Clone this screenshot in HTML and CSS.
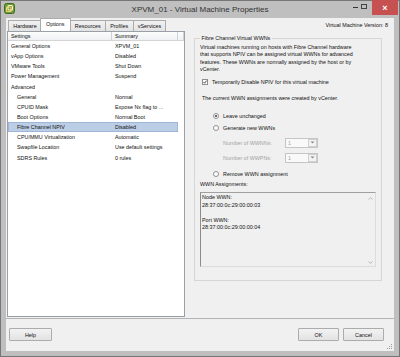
FILE: index.html
```html
<!DOCTYPE html>
<html>
<head>
<meta charset="utf-8">
<link rel="stylesheet" href="styles.css">
</head>
<body>
<div class="window">
  <div class="titlebar">
    <div class="tb-left">
      <svg class="app-icon" width="11" height="11" viewBox="0 0 11 11">
        <rect x="0.5" y="0.5" width="10" height="10" rx="2" fill="#6f9d3d" stroke="#3f6a1c"/>
        <rect x="2.5" y="4" width="4.5" height="4.5" rx="1" fill="none" stroke="#f3d36a" stroke-width="1.1"/>
        <rect x="4" y="2.5" width="4.5" height="4.5" rx="1" fill="none" stroke="#fff3c4" stroke-width="1.1"/>
      </svg>
    </div>
    <div class="title">XPVM_01 - Virtual Machine Properties</div>
    <div class="controls">
      <span class="ctl-min"></span>
      <span class="ctl-max"></span>
      <span class="ctl-close">×</span>
    </div>
  </div>
  <div class="client">
    <div class="tabbar">
      <div class="tabs">
        <span class="tab">Hardware</span>
        <span class="tab active">Options</span>
        <span class="tab">Resources</span>
        <span class="tab">Profiles</span>
        <span class="tab">vServices</span>
      </div>
      <div class="version">Virtual Machine Version: 8</div>
    </div>
    <div class="main">
      <div class="list">
        <div class="list-head">
          <span class="h1">Settings</span>
          <span class="h2">Summary</span>
          <span class="h3"></span>
        </div>
        <div class="row"><span class="c1">General Options</span><span class="c2">XPVM_01</span></div>
        <div class="row"><span class="c1">vApp Options</span><span class="c2">Disabled</span></div>
        <div class="row"><span class="c1">VMware Tools</span><span class="c2">Shut Down</span></div>
        <div class="row"><span class="c1">Power Management</span><span class="c2">Suspend</span></div>
        <div class="row"><span class="c1">Advanced</span><span class="c2"></span></div>
        <div class="row sub"><span class="c1">General</span><span class="c2">Normal</span></div>
        <div class="row sub"><span class="c1">CPUID Mask</span><span class="c2">Expose Nx flag to ...</span></div>
        <div class="row sub"><span class="c1">Boot Options</span><span class="c2">Normal Boot</span></div>
        <div class="row sub selected"><span class="c1">Fibre Channel NPIV</span><span class="c2">Disabled</span></div>
        <div class="row sub"><span class="c1">CPU/MMU Virtualization</span><span class="c2">Automatic</span></div>
        <div class="row sub"><span class="c1">Swapfile Location</span><span class="c2">Use default settings</span></div>
        <div class="row sub"><span class="c1">SDRS Rules</span><span class="c2">0 rules</span></div>
      </div>
      <div class="pane">
        <fieldset class="group">
          <legend>Fibre Channel Virtual WWNs</legend>
          <p class="desc">Virtual machines running on hosts with Fibre Channel hardware<br>that supports NPIV can be assigned virtual WWNs for advanced<br>features. These WWNs are normally assigned by the host or by<br>vCenter.</p>
          <div class="check-row">
            <svg class="checkbox" width="6" height="6" viewBox="0 0 6 6">
              <rect x="0.5" y="0.5" width="5" height="5" fill="#fff" stroke="#8e8f8f"/>
              <path d="M1.5 3 L2.6 4.2 L4.6 1.6" fill="none" stroke="#333" stroke-width="0.9"/>
            </svg>
            <span>Temporarily Disable NPIV for this virtual machine</span>
          </div>
          <p class="note">The current WWN assignments were created by vCenter.</p>
          <div class="radio-row r1"><span class="radio on"></span><span>Leave unchanged</span></div>
          <div class="radio-row r2"><span class="radio"></span><span>Generate new WWNs</span></div>
          <div class="num-row n1">
            <span class="num-label">Number of WWNNs:</span>
            <span class="combo"><span class="combo-val">1</span><span class="combo-btn"><svg width="5" height="3" viewBox="0 0 5 3"><path d="M0.5 0.5 L2.5 2.5 L4.5 0.5 Z" fill="#8a8a8a"/></svg></span></span>
          </div>
          <div class="num-row n2">
            <span class="num-label">Number of WWPNs:</span>
            <span class="combo"><span class="combo-val">1</span><span class="combo-btn"><svg width="5" height="3" viewBox="0 0 5 3"><path d="M0.5 0.5 L2.5 2.5 L4.5 0.5 Z" fill="#8a8a8a"/></svg></span></span>
          </div>
          <div class="radio-row r3"><span class="radio"></span><span>Remove WWN assignment</span></div>
          <p class="assign-label">WWN Assignments:</p>
          <div class="wwn-box">
            <div class="wwn-text">Node WWN:<br>28:37:00:0c:29:00:00:03<br><br>Port WWN:<br>28:37:00:0c:29:00:00:04</div>
            <div class="wwn-scroll">
              <svg width="5" height="3" viewBox="0 0 5 3"><path d="M0.5 2.5 L2.5 0.7 L4.5 2.5" fill="none" stroke="#a8a8a8" stroke-width="0.8"/></svg>
              <svg width="5" height="3" viewBox="0 0 5 3"><path d="M0.5 0.5 L2.5 2.3 L4.5 0.5" fill="none" stroke="#a8a8a8" stroke-width="0.8"/></svg>
            </div>
          </div>
        </fieldset>
      </div>
    </div>
    <div class="footer">
      <button class="btn help">Help</button>
      <div class="footer-right">
        <button class="btn">OK</button>
        <button class="btn">Cancel</button>
      </div>
      <svg class="grip" width="7" height="7" viewBox="0 0 7 7">
        <g fill="#9a9a9a">
          <rect x="5" y="1" width="1" height="1"/>
          <rect x="3" y="3" width="1" height="1"/><rect x="5" y="3" width="1" height="1"/>
          <rect x="1" y="5" width="1" height="1"/><rect x="3" y="5" width="1" height="1"/><rect x="5" y="5" width="1" height="1"/>
        </g>
      </svg>
    </div>
  </div>
</div>
</body>
</html>
```

FILE: styles.css
```css
* { box-sizing: border-box; margin: 0; padding: 0; }
html, body { width: 400px; height: 357px; overflow: hidden; }
body {
  font-family: "Liberation Sans", Arial, sans-serif;
  font-size: 5.4px;
  color: #111;
  background: #c4c4c4;
}

.window {
  width: 400px;
  height: 357px;
  background: #bfbfbf;
  border: 1px solid #767676;
  padding: 0 5px 5px 5px;
  display: flex;
  flex-direction: column;
}

/* title bar */
.titlebar {
  height: 17px;
  margin: 0 -5px;
  display: grid;
  grid-template-columns: 1fr auto 1fr;
  align-items: center;
}
.tb-left { display: flex; align-items: center; padding-left: 3px; }
.app-icon { display: block; margin-top: -2px; }
.title {
  font-size: 8px;
  color: #333;
  margin-top: -1px;
}
.controls {
  justify-self: end;
  align-self: start;
  display: flex;
  align-items: flex-start;
  margin-top: -1px;
  padding-right: 1px;
}
.ctl-min {
  width: 5px; height: 1px; background: #333;
  margin-top: 7px; margin-right: 3px;
}
.ctl-max {
  width: 6px; height: 5px; border: 1px solid #444; border-top-width: 1.5px;
  margin-top: 4px; margin-right: 5px;
}
.ctl-close {
  width: 26px; height: 15px;
  background: #c75050;
  color: #fff;
  font-size: 9px;
  font-weight: bold;
  display: flex; align-items: center; justify-content: center;
}

/* client */
.client {
  flex: 1;
  background: #f0f0f0;
  display: flex;
  flex-direction: column;
}

.tabbar {
  height: 13px;
  display: flex;
  justify-content: space-between;
  align-items: flex-end;
}
.tabs { display: flex; align-items: flex-end; padding-left: 2px; }
.tab {
  height: 11px;
  padding: 0 4.3px;
  line-height: 10px;
  border: 1px solid #acacac;
  border-bottom: none;
  background: linear-gradient(#f2f2f2, #e3e3e3);
  margin-right: -1px;
}
.tab.active {
  height: 13px;
  line-height: 11px;
  background: #fff;
  margin: 0 -1px 0 -1px;
  padding: 0 5px;
  position: relative;
  z-index: 1;
}
.version {
  align-self: center;
  padding-right: 6px;
}

/* main */
.main {
  height: 287px;
  display: flex;
}
.list {
  margin-left: 1px;
  width: 178px;
  height: 286px;
  background: #fff;
  border: 1px solid #9aa0a8;
}
.list-head {
  height: 9px;
  display: flex;
  background: linear-gradient(#fcfcfc, #eef0f2);
  border-bottom: 1px solid #d5d5d5;
  line-height: 8px;
}
.list-head span { border-right: 1px solid #cfd2d6; }
.h1 { width: 104px; padding-left: 3px; }
.h2 { width: 66px; padding-left: 3px; }
.h3 { width: 6px; }

.row {
  height: 10.15px;
  display: flex;
  align-items: center;
  width: 170px;
}
.c1 { width: 104px; padding-left: 3px; white-space: nowrap; }
.c2 { width: 66px; padding-left: 3px; white-space: nowrap; }
.row.sub .c1 { padding-left: 9px; }
.row.selected {
  background: #bccee6;
  outline: 1px solid #9fb6d6;
  outline-offset: -1px;
}

/* right pane */
.pane {
  margin-left: 9px;
  width: 188px;
  padding-top: 3.5px;
}
.group {
  border: 1px solid #d6d6d6;
  padding: 2px 5px 13px 5px;
}
.group legend {
  padding: 0 1.5px;
  line-height: 7px;
}
.desc {
  line-height: 7.6px;
  white-space: nowrap;
}
.check-row {
  height: 7px;
  margin-top: 4.6px;
  margin-left: 2px;
  display: flex;
  align-items: center;
  white-space: nowrap;
}
.checkbox { display: block; margin-right: 4px; }
.note {
  height: 7px;
  line-height: 7px;
  margin-top: 10px;
  margin-left: 2px;
}
.radio-row {
  height: 7px;
  margin-left: 13px;
  display: flex;
  align-items: center;
}
.radio-row.r1 { margin-top: 10px; }
.radio-row.r2 { margin-top: 5px; }
.radio-row.r3 { margin-top: 7.5px; }
.radio {
  width: 6px; height: 6px;
  border: 1px solid #8e8f8f;
  border-radius: 50%;
  background: #fff;
  margin-right: 4px;
  display: flex; align-items: center; justify-content: center;
}
.radio.on::after {
  content: "";
  width: 2px; height: 2px;
  border-radius: 50%;
  background: #333;
}
.num-row {
  height: 10px;
  margin-left: 23px;
  display: flex;
  align-items: center;
  color: #a3a3a3;
}
.num-row.n1 { margin-top: 6.5px; }
.num-row.n2 { margin-top: 5px; }
.num-label { width: 62px; }
.combo {
  width: 33px;
  height: 10px;
  border: 1px solid #c5c5c5;
  background: #f9f9f9;
  display: flex;
  align-items: center;
  justify-content: space-between;
}
.combo-val { padding-left: 2px; }
.combo-btn {
  width: 9px;
  height: 8px;
  border: 1px solid #d0d0d0;
  background: #f3f3f3;
  display: flex; align-items: center; justify-content: center;
}
.combo-btn svg { display: block; }
.assign-label {
  height: 7px;
  line-height: 7px;
  margin-top: 4px;
}
.wwn-box {
  margin-top: 3.5px;
  width: 176px;
  height: 75px;
  border: 1px solid #b5b5b5;
  border-top-color: #a0a0a0;
  border-left-color: #8c8c8c;
  border-right-color: #dcdcdc;
  border-bottom-color: #dcdcdc;
  display: flex;
  background: #f0f0f0;
}
.wwn-text {
  flex: 1;
  padding: 1px 0 0 1px;
  line-height: 7.6px;
}
.wwn-scroll {
  width: 10px;
  display: flex;
  flex-direction: column;
  justify-content: space-between;
  align-items: center;
  padding: 4px 0 2px;
}
.wwn-scroll svg { display: block; }

/* footer */
.footer {
  flex: 1;
  border-top: 1px solid #b4b4b4;
  padding: 9px 10px 0 3px;
  display: flex;
  justify-content: space-between;
  align-items: flex-start;
  position: relative;
}
.footer-right { display: flex; gap: 4px; }
.btn {
  font-family: inherit;
  font-size: 5.4px;
  color: #111;
  height: 13px;
  width: 41px;
  border: 1px solid #acacac;
  background: linear-gradient(#f2f2f2, #e3e3e3);
  border-radius: 1px;
}
.btn.help { width: 43px; }
.grip {
  position: absolute;
  right: 1px;
  bottom: 1px;
}
```
